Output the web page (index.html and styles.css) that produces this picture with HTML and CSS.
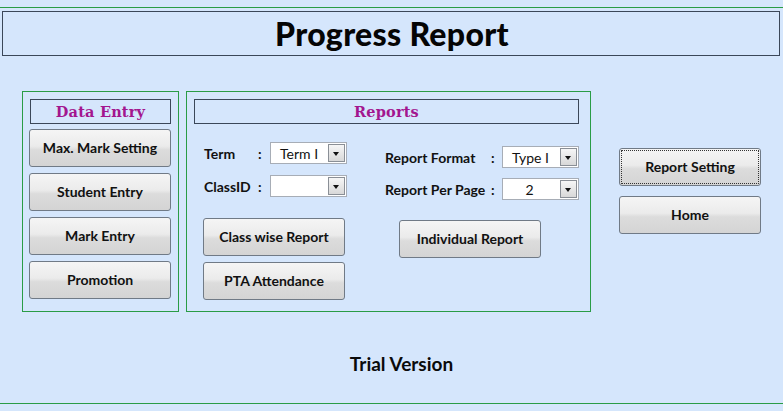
FILE: index.html
```html
<!DOCTYPE html>
<html>
<head>
<meta charset="utf-8">
<title>Progress Report</title>
<link rel="stylesheet" href="styles.css">
</head>
<body>
<div class="page">
  <div class="topline"></div>
  <div class="title-box"><h1 class="title">Progress Report</h1></div>
  <div class="main">
    <section class="panel panel-data">
      <div class="panel-head">Data Entry</div>
      <div class="btn-stack">
        <button class="btn">Max. Mark Setting</button>
        <button class="btn">Student Entry</button>
        <button class="btn">Mark Entry</button>
        <button class="btn">Promotion</button>
      </div>
    </section>
    <section class="panel panel-reports">
      <div class="panel-head">Reports</div>
      <div class="cols">
        <div class="col col-left">
          <div class="field-row">
            <span class="lbl lbl-short">Term</span><span class="colon">:</span>
            <div class="combo"><span class="combo-text">Term I</span><span class="combo-arrow"></span></div>
          </div>
          <div class="field-row row-gap">
            <span class="lbl lbl-short">ClassID</span><span class="colon">:</span>
            <div class="combo"><span class="combo-text"></span><span class="combo-arrow"></span></div>
          </div>
          <button class="btn btn-first">Class wise Report</button>
          <button class="btn btn-next">PTA Attendance</button>
        </div>
        <div class="col col-right">
          <div class="field-row">
            <span class="lbl lbl-long">Report Format</span><span class="colon">:</span>
            <div class="combo"><span class="combo-text">Type I</span><span class="combo-arrow"></span></div>
          </div>
          <div class="field-row row-gap2">
            <span class="lbl lbl-long">Report Per Page</span><span class="colon">:</span>
            <div class="combo"><span class="combo-text combo-center">2</span><span class="combo-arrow"></span></div>
          </div>
          <button class="btn btn-indiv">Individual Report</button>
        </div>
      </div>
    </section>
    <div class="side">
      <button class="btn btn-focus">Report Setting</button>
      <button class="btn btn-home">Home</button>
    </div>
  </div>
  <div class="trial">Trial Version</div>
  <div class="bottomline"></div>
</div>
</body>
</html>
```

FILE: styles.css
```css
* { box-sizing: border-box; }
html, body { margin: 0; padding: 0; }
body {
  background: #d5e6fc;
  font-family: Lato, "Open Sans", sans-serif;
  color: #111;
}
.page {
  width: 783px;
  height: 411px;
  overflow: hidden;
  background: #d5e6fc;
}
.topline {
  margin-top: 7px;
  border-top: 1px solid #2a9c46;
}
.title-box {
  margin: 3px 3px 0 2px;
  height: 45px;
  border: 1px solid #3b4759;
  display: flex;
  align-items: center;
  justify-content: center;
}
.title {
  margin: 0;
  padding-left: 2px;
  font-family: Lato, sans-serif;
  font-weight: 900;
  font-size: 32px;
  letter-spacing: 0.3px;
  color: #050505;
  line-height: 1;
}
.main {
  display: flex;
  align-items: flex-start;
  margin-top: 35px;
  padding-left: 22px;
}
.panel {
  height: 221px;
  border: 1px solid #2a9c46;
  padding: 7px 0 0 7px;
  flex: none;
}
.panel-data { width: 157px; padding-left: 6px; }
.panel-reports { width: 405px; margin-left: 7px; }
.panel-head {
  height: 25px;
  border: 1px solid #3b4759;
  display: flex;
  align-items: center;
  justify-content: center;
  font-family: "DejaVu Serif", serif;
  font-weight: bold;
  font-size: 14.5px;
  color: #a3168f;
  letter-spacing: 0.2px;
}
.panel-data .panel-head { width: 141px; margin-left: 1px; }
.panel-reports .panel-head { width: 385px; }
.btn-stack {
  display: flex;
  flex-direction: column;
  gap: 6px;
  margin-top: 5px;
}
.btn {
  display: flex;
  align-items: center;
  justify-content: center;
  flex: none;
  width: 142px;
  height: 38px;
  padding: 0 0 1px;
  border: 1px solid #707a86;
  border-radius: 3px;
  background: linear-gradient(#f5f5f5 0%, #ebebeb 45%, #dcdcdc 55%, #d4d4d4 100%);
  font-family: Lato, sans-serif;
  font-weight: bold;
  font-size: 14px;
  color: #111;
  cursor: pointer;
}
.cols { display: flex; margin-top: 18px; }
.col { display: flex; flex-direction: column; flex: none; }
.col-left { margin-left: 9px; }
.col-right { margin-left: 37px; padding-top: 4px; }
.field-row {
  display: flex;
  align-items: center;
  height: 22px;
}
.row-gap { margin-top: 11px; }
.row-gap2 { margin-top: 10px; }
.lbl {
  flex: none;
  font-weight: bold;
  font-size: 14px;
  padding-left: 1px;
}
.lbl-short { width: 55px; }
.lbl-long { width: 107px; }
.colon {
  flex: none;
  font-weight: bold;
  font-size: 14px;
  width: 12px;
}
.col-right .colon { width: 11px; }
.combo {
  width: 77px;
  height: 22px;
  flex: none;
  background: #fff;
  border: 1px solid #a7adb6;
  display: flex;
  align-items: center;
  padding: 0 1px 0 0;
}
.combo-text {
  flex: 1;
  padding-left: 9px;
  font-size: 14px;
  color: #111;
}
.combo-center { text-align: center; padding-left: 0; padding-right: 4px; }
.combo-arrow {
  width: 17px;
  height: 18px;
  border: 1px solid #8a8f96;
  background: linear-gradient(#f6f6f6, #d8d8d8);
  position: relative;
}
.combo-arrow::after {
  content: "";
  position: absolute;
  left: 4px;
  top: 7px;
  border-left: 3.5px solid transparent;
  border-right: 3.5px solid transparent;
  border-top: 4px solid #111;
}
.btn-first { margin-top: 21px; }
.btn-next { margin-top: 6px; }
.btn-indiv { margin-top: 20px; margin-left: 15px; }
.side {
  display: flex;
  flex-direction: column;
  margin-left: 28px;
  margin-top: 57px;
}
.btn-focus { outline: 1px dotted #333; outline-offset: -3px; }
.btn-home { margin-top: 10px; }
.trial {
  margin-top: 42px;
  padding-left: 20px;
  text-align: center;
  font-family: Lato, sans-serif;
  font-weight: bold;
  font-size: 19px;
  line-height: 20px;
  color: #0a0a0a;
}
.bottomline {
  margin-top: 29px;
  border-top: 1px solid #2a9c46;
}
```
